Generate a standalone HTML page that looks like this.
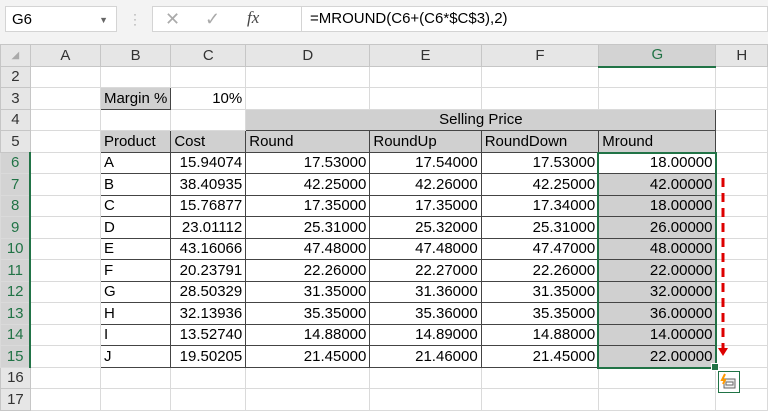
<!DOCTYPE html><html><head><style>
body{margin:0;width:768px;height:401px;overflow:hidden;background:#fff;font-family:"Liberation Sans",sans-serif;position:relative}
.top{position:absolute;left:0;top:0;width:768px;height:44px;background:#f3f3f3;border-bottom:1px solid #d4d4d4}
.nb{position:absolute;left:5px;top:6px;width:112px;height:26px;background:#fff;border:1px solid #d4d4d4;font-size:15px;line-height:26px;padding-left:6px;box-sizing:border-box}
.fb{position:absolute;left:152px;top:6px;width:150px;height:26px;background:#fff;border:1px solid #d4d4d4;box-sizing:border-box;color:#aaa}
.fx{position:absolute;left:301px;top:6px;width:467px;height:26px;background:#fff;border:1px solid #d4d4d4;box-sizing:border-box;font-size:15px;line-height:24px;padding-left:8px}
table{position:absolute;left:0;top:44px;border-collapse:collapse;table-layout:fixed;font-size:15px}
td{border:1px solid #dadada;padding:0 3px;white-space:nowrap;overflow:hidden;height:21px;line-height:20px;box-sizing:border-box}
tr.b td{height:22px}
td.h{background:#e6e6e6;text-align:center;color:#333;border-color:#c6c6c6;padding:0}
td.hs{background:#d3d3d3;color:#217346;border-right:2px solid #217346;text-align:center;padding:0}
tr.ch td{height:22px;background:#e6e6e6;text-align:center;color:#333;border-color:#c6c6c6}
.d{border:1px solid #444}
.g{background:#d0d0d0}
.r{text-align:right}
</style></head><body>
<div class="top">
<div class="nb">G6<span style="position:absolute;right:8px;top:0;font-size:9px;color:#666">▼</span></div>
<div style="position:absolute;left:133px;top:12px;color:#999;font-size:12px;line-height:5px">·<br>·<br>·</div>
<div class="fb"><span style="position:absolute;left:12px;top:2px;font-size:18px">✕</span><span style="position:absolute;left:52px;top:2px;font-size:18px">✓</span><span style="position:absolute;left:94px;top:1px;font-size:17px;color:#444;font-style:italic;font-family:'Liberation Serif',serif">fx</span></div>
<div class="fx">=MROUND(C6+(C6*$C$3),2)</div>
</div>
<table>
<colgroup><col style="width:30px"><col style="width:71px"><col style="width:67px"><col style="width:75px"><col style="width:125px"><col style="width:112px"><col style="width:118px"><col style="width:118px"><col style="width:52px"></colgroup>
<tr class="ch"><td style="font-size:10px;color:#aaa">◢</td><td>A</td><td>B</td><td>C</td><td>D</td><td>E</td><td>F</td><td style="background:#d3d3d3;color:#217346;border-bottom:2px solid #217346">G</td><td>H</td></tr>
<tr><td class="h">2</td><td></td><td></td><td></td><td></td><td></td><td></td><td></td><td></td></tr>
<tr class="b"><td class="h">3</td><td></td><td class="d g">Margin %</td><td class="r">10%</td><td></td><td></td><td></td><td></td><td></td></tr>
<tr><td class="h">4</td><td></td><td></td><td></td><td class="d g" colspan="4" style="text-align:center">Selling Price</td><td></td></tr>
<tr class="b"><td class="h">5</td><td></td><td class="d g">Product</td><td class="d g">Cost</td><td class="d g">Round</td><td class="d g">RoundUp</td><td class="d g">RoundDown</td><td class="d g">Mround</td><td></td></tr>
<tr><td class="hs">6</td><td></td><td class="d">A</td><td class="d r">15.94074</td><td class="d r">17.53000</td><td class="d r">17.54000</td><td class="d r">17.53000</td><td class="d r">18.00000</td><td></td></tr>
<tr class="b"><td class="hs">7</td><td></td><td class="d">B</td><td class="d r">38.40935</td><td class="d r">42.25000</td><td class="d r">42.26000</td><td class="d r">42.25000</td><td class="d r g">42.00000</td><td></td></tr>
<tr><td class="hs">8</td><td></td><td class="d">C</td><td class="d r">15.76877</td><td class="d r">17.35000</td><td class="d r">17.35000</td><td class="d r">17.34000</td><td class="d r g">18.00000</td><td></td></tr>
<tr class="b"><td class="hs">9</td><td></td><td class="d">D</td><td class="d r">23.01112</td><td class="d r">25.31000</td><td class="d r">25.32000</td><td class="d r">25.31000</td><td class="d r g">26.00000</td><td></td></tr>
<tr><td class="hs">10</td><td></td><td class="d">E</td><td class="d r">43.16066</td><td class="d r">47.48000</td><td class="d r">47.48000</td><td class="d r">47.47000</td><td class="d r g">48.00000</td><td></td></tr>
<tr class="b"><td class="hs">11</td><td></td><td class="d">F</td><td class="d r">20.23791</td><td class="d r">22.26000</td><td class="d r">22.27000</td><td class="d r">22.26000</td><td class="d r g">22.00000</td><td></td></tr>
<tr><td class="hs">12</td><td></td><td class="d">G</td><td class="d r">28.50329</td><td class="d r">31.35000</td><td class="d r">31.36000</td><td class="d r">31.35000</td><td class="d r g">32.00000</td><td></td></tr>
<tr class="b"><td class="hs">13</td><td></td><td class="d">H</td><td class="d r">32.13936</td><td class="d r">35.35000</td><td class="d r">35.36000</td><td class="d r">35.35000</td><td class="d r g">36.00000</td><td></td></tr>
<tr><td class="hs">14</td><td></td><td class="d">I</td><td class="d r">13.52740</td><td class="d r">14.88000</td><td class="d r">14.89000</td><td class="d r">14.88000</td><td class="d r g">14.00000</td><td></td></tr>
<tr class="b"><td class="hs">15</td><td></td><td class="d">J</td><td class="d r">19.50205</td><td class="d r">21.45000</td><td class="d r">21.46000</td><td class="d r">21.45000</td><td class="d r g">22.00000</td><td></td></tr>
<tr><td class="h">16</td><td></td><td></td><td></td><td></td><td></td><td></td><td></td><td></td></tr>
<tr class="b"><td class="h">17</td><td></td><td></td><td></td><td></td><td></td><td></td><td></td><td></td></tr>
</table>
<div style="position:absolute;left:597px;top:152px;width:116px;height:213px;border:2px solid #217346"></div>
<div style="position:absolute;left:711px;top:363px;width:6px;height:6px;background:#217346;border:1px solid #fff"></div>
<svg style="position:absolute;left:715px;top:170px" width="20" height="200"><line x1="8" y1="8" x2="8" y2="178" stroke="#d00" stroke-width="3" stroke-dasharray="9,6"/><path d="M3 178 L13 178 L8 186 Z" fill="#d00"/></svg>
<div style="position:absolute;left:718px;top:371px;width:22px;height:22px;border:1px solid #217346;background:#fff;box-sizing:border-box"><svg width="20" height="20"><rect x="5" y="7" width="11" height="9" fill="#eee" stroke="#666"/><rect x="7" y="10" width="7" height="3" fill="#fff" stroke="#666"/><path d="M6 2 L3 8 L6 8 L4 12" stroke="#f90" stroke-width="2" fill="none"/></svg></div>
</body></html>
